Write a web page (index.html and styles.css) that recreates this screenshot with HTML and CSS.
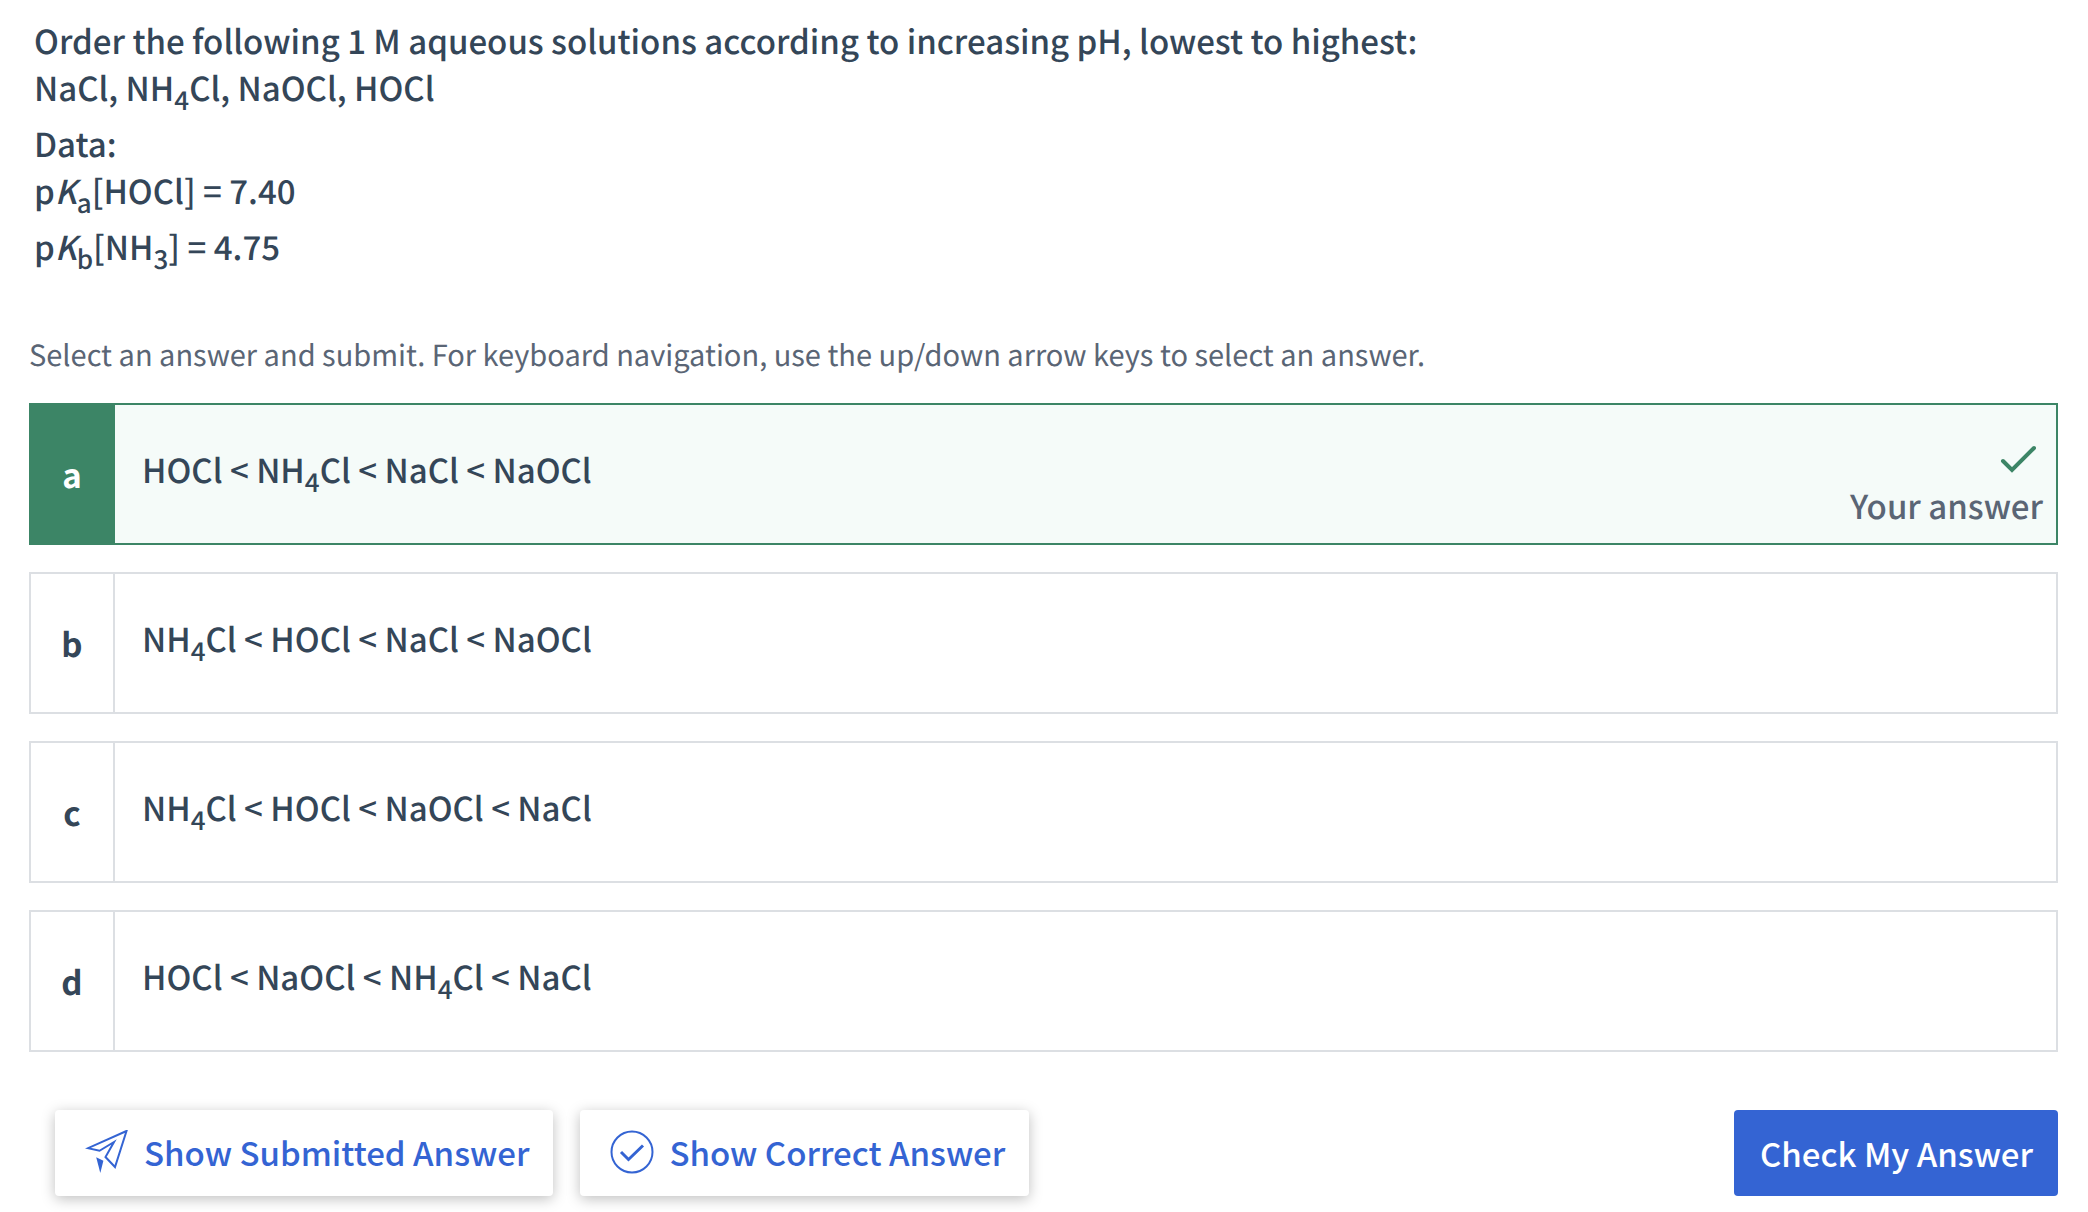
FILE: index.html
```html
<!DOCTYPE html>
<html lang="en">
<head>
<meta charset="utf-8">
<title>Acid and base solutions</title>
<link rel="stylesheet" href="styles.css">
</head>
<body>
<main class="page">
  <section class="question">
    <p>Order the following 1 M aqueous solutions according to increasing pH, lowest to highest:</p>
    <p class="formula">NaCl, NH<sub>4</sub>Cl, NaOCl, HOCl</p>
    <p>Data:</p>
    <p class="formula">p<i>K</i><sub>a</sub>[HOCl] = 7.40</p>
    <p class="formula">p<i>K</i><sub>b</sub>[NH<sub>3</sub>] = 4.75</p>
  </section>
  <form class="quiz">
    <fieldset class="answers">
      <legend class="hint">Select an answer and submit. For keyboard navigation, use the up/down arrow keys to select an answer.</legend>
      <label class="answer answer-correct">
        <input class="answer-input" type="radio" name="answer" value="a" checked>
        <span class="letter">a</span>
        <span class="choice">HOCl &lt; NH<sub>4</sub>Cl &lt; NaCl &lt; NaOCl</span>
        <span class="verdict">
          <svg class="tick" viewBox="0 0 36 28" aria-hidden="true"><path d="M3 16l9 9L34 3"/></svg>
          <span>Your answer</span>
        </span>
      </label>
      <label class="answer">
        <input class="answer-input" type="radio" name="answer" value="b">
        <span class="letter">b</span>
        <span class="choice">NH<sub>4</sub>Cl &lt; HOCl &lt; NaCl &lt; NaOCl</span>
      </label>
      <label class="answer">
        <input class="answer-input" type="radio" name="answer" value="c">
        <span class="letter">c</span>
        <span class="choice">NH<sub>4</sub>Cl &lt; HOCl &lt; NaOCl &lt; NaCl</span>
      </label>
      <label class="answer">
        <input class="answer-input" type="radio" name="answer" value="d">
        <span class="letter">d</span>
        <span class="choice">HOCl &lt; NaOCl &lt; NH<sub>4</sub>Cl &lt; NaCl</span>
      </label>
    </fieldset>
    <div class="actions">
      <button class="button" type="button">
        <svg class="icon" viewBox="0 0 44 44" aria-hidden="true">
          <path d="M41.5 1L3 18.2l11.5 2.6L29 12l-8.500 15L30 37z"/>
          <path class="icon-fill" d="M11.200 27.300l7.200 3.400L15.300 43z"/>
        </svg>
        Show Submitted Answer
      </button>
      <button class="button" type="button">
        <svg class="icon" viewBox="0 0 44 44" aria-hidden="true">
          <circle cx="22" cy="22" r="20.500"/>
          <path class="icon-bold" d="M11 22l7.500 7.500L33 15.500"/>
        </svg>
        Show Correct Answer
      </button>
      <button class="button button-primary" type="submit">Check My Answer</button>
    </div>
  </form>
</main>
</body>
</html>
```
FILE: styles.css
```css
* { box-sizing: border-box; }
body { margin: 0; background: #fff; color: #344658; font-family: "Noto Sans CJK SC", sans-serif; font-size: 33px; font-weight: 500; line-height: 47px; text-rendering: geometricPrecision; }
.page { padding: 17px 30px 16px 29px; }
.question { padding-left: 5px; }
.question p { margin: 0; }
.question .formula { padding-bottom: 9px; }
sub { font-size: 26px; line-height: 0; vertical-align: baseline; position: relative; top: 9px; }
.answers { border: 0; margin: 51px 0 0; padding: 0; min-width: 0; }
.hint { padding: 0; margin-bottom: 25px; color: #5a6575; font-size: 29px; font-weight: 400; line-height: 48px; }
.answer { display: flex; min-height: 142px; border: 2px solid #dcdfe3; margin-bottom: 27px; position: relative; }
.answer-input { position: absolute; opacity: 0; margin: 0; }
.letter { width: 84px; border-right: 2px solid #dcdfe3; display: flex; align-items: center; justify-content: center; font-weight: 700; }
.choice { flex: 1; padding: 41px 27px 0; }
.answer-correct { border-color: #3c8566; background: #f5fbf9; }
.answer-correct .letter { background: #3c8566; border-color: #3c8566; color: #fff; }
.verdict { display: flex; flex-direction: column; align-items: flex-end; gap: 9px; padding: 40px 13px 0; color: #5a6575; }
.tick { width: 36px; height: 28px; margin-right: 7px; fill: none; stroke: #3c8566; stroke-width: 4; stroke-linecap: round; }
.actions { display: flex; gap: 27px; margin-top: 31px; padding-left: 26px; }
.button { display: flex; align-items: center; gap: 15px; height: 86px; padding: 0 24px 2px 30px; border: 0; border-radius: 4px; background: #fff; color: #3464d3; font: inherit; box-shadow: 0 3px 14px rgba(0, 0, 0, .25); }
.button-primary { margin-left: auto; background: #3464d3; color: #fff; padding: 0 25px 0 26px; box-shadow: none; }
.icon { width: 44px; height: 44px; fill: none; stroke: currentColor; stroke-width: 2; }
.icon-fill { fill: currentColor; stroke: none; }
.icon-bold { stroke-width: 3; }
```
